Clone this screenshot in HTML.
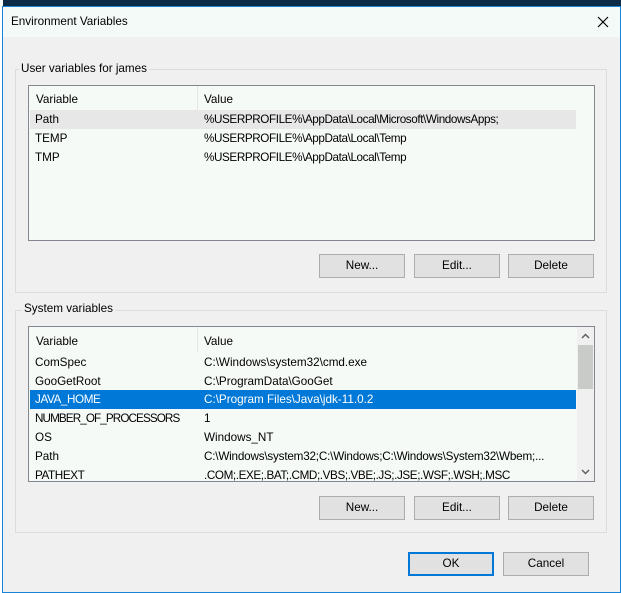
<!DOCTYPE html>
<html><head><style>
*{box-sizing:border-box;margin:0;padding:0}
body{width:621px;height:593px;overflow:hidden;background:#0b2a45;font-family:"Liberation Sans",sans-serif;font-size:11.7px;color:#000;position:relative}
.abs{position:absolute}
#dlg{left:2px;top:6px;width:619px;height:587px;background:#f0f0f0;border:1px solid #1883d7}
#title{left:0;top:0;width:617px;height:30px;background:#f4faf7}
.grp{border:1px solid #dcdcdc}
.lbl{background:#f0f0f0;padding:0 2px;line-height:14px}
.list{background:#f6faf7;border:1px solid #828790;overflow:hidden}
.row{position:absolute;left:6px;height:19px;line-height:20px;white-space:nowrap}
.btn{background:#e1e1e1;border:1px solid #adadad;text-align:center;line-height:22px;height:24px;width:86px}
.up{letter-spacing:-0.4px}
</style></head><body>
<div class="abs" style="left:0;top:0;width:3px;height:593px;background:#fff"></div>
<div id="dlg" class="abs">
<div id="title" class="abs"><span class="abs" style="left:8px;top:8px">Environment Variables</span>
<svg class="abs" style="left:594px;top:9px" width="12" height="12"><path d="M1 1L11 11M11 1L1 11" stroke="#000" stroke-width="1.2"/></svg></div>
</div>
<!-- user group -->
<div class="abs grp" style="left:15px;top:69px;width:592px;height:224px"></div>
<div class="abs lbl" style="left:19px;top:62px">User variables for james</div>
<div class="abs list" style="left:28px;top:85px;width:567px;height:156px">
 <div class="abs" style="left:168px;top:0;width:1px;height:24px;background:#e5e5e5"></div>
 <span class="abs" style="left:7px;top:7px">Variable</span><span class="abs" style="left:175px;top:7px">Value</span>
 <div class="abs" style="left:1px;top:24px;width:546px;height:19px;background:#e6e7e6"></div>
 <div class="row" style="top:24px">Path</div><div class="row up" style="left:175px;top:24px">%USERPROFILE%\AppData\Local\Microsoft\WindowsApps;</div>
 <div class="row" style="top:43px">TEMP</div><div class="row up" style="left:175px;top:43px">%USERPROFILE%\AppData\Local\Temp</div>
 <div class="row" style="top:62px">TMP</div><div class="row up" style="left:175px;top:62px">%USERPROFILE%\AppData\Local\Temp</div>
</div>
<div class="abs btn" style="left:319px;top:254px">New...</div>
<div class="abs btn" style="left:414px;top:254px">Edit...</div>
<div class="abs btn" style="left:508px;top:254px">Delete</div>
<!-- system group -->
<div class="abs grp" style="left:15px;top:310px;width:592px;height:223px"></div>
<div class="abs lbl" style="left:22px;top:302px">System variables</div>
<div class="abs list" style="left:28px;top:326px;width:567px;height:156px">
 <div class="abs" style="left:168px;top:0;width:1px;height:25px;background:#e5e5e5"></div>
 <span class="abs" style="left:7px;top:8px">Variable</span><span class="abs" style="left:175px;top:8px">Value</span>
 <div class="row" style="top:26px">ComSpec</div><div class="row" style="left:175px;top:26px">C:\Windows\system32\cmd.exe</div>
 <div class="row" style="top:45px">GooGetRoot</div><div class="row" style="left:175px;top:45px">C:\ProgramData\GooGet</div>
 <div class="abs" style="left:1px;top:63px;width:546px;height:19px;background:#0078d7"></div>
 <div class="row up" style="top:63px;color:#fff">JAVA_HOME</div><div class="row" style="left:175px;top:63px;color:#fff">C:\Program Files\Java\jdk-11.0.2</div>
 <div class="row" style="top:82px;letter-spacing:-0.9px">NUMBER_OF_PROCESSORS</div><div class="row" style="left:175px;top:82px">1</div>
 <div class="row" style="top:101px">OS</div><div class="row" style="left:175px;top:101px">Windows_NT</div>
 <div class="row" style="top:120px">Path</div><div class="row" style="left:175px;top:120px;letter-spacing:-0.2px">C:\Windows\system32;C:\Windows;C:\Windows\System32\Wbem;...</div>
 <div class="row up" style="top:139px">PATHEXT</div><div class="row up" style="left:175px;top:139px">.COM;.EXE;.BAT;.CMD;.VBS;.VBE;.JS;.JSE;.WSF;.WSH;.MSC</div>
 <div class="abs" style="left:548px;top:0;width:17px;height:154px;background:#f0f0f0"></div>
 <div class="abs" style="left:549px;top:18px;width:15px;height:44px;background:#c8cbc8"></div>
 <svg class="abs" style="left:551px;top:5px" width="11" height="8"><path d="M2 6L5.5 2.5L9 6" fill="none" stroke="#606060" stroke-width="1.5"/></svg>
 <svg class="abs" style="left:551px;top:141px" width="11" height="8"><path d="M2 2L5.5 5.5L9 2" fill="none" stroke="#606060" stroke-width="1.5"/></svg>
</div>
<div class="abs btn" style="left:319px;top:496px">New...</div>
<div class="abs btn" style="left:414px;top:496px">Edit...</div>
<div class="abs btn" style="left:508px;top:496px">Delete</div>
<div class="abs btn" style="left:408px;top:552px;width:86px;border:2px solid #0078d7;line-height:20px">OK</div>
<div class="abs btn" style="left:503px;top:552px">Cancel</div>
</body></html>
